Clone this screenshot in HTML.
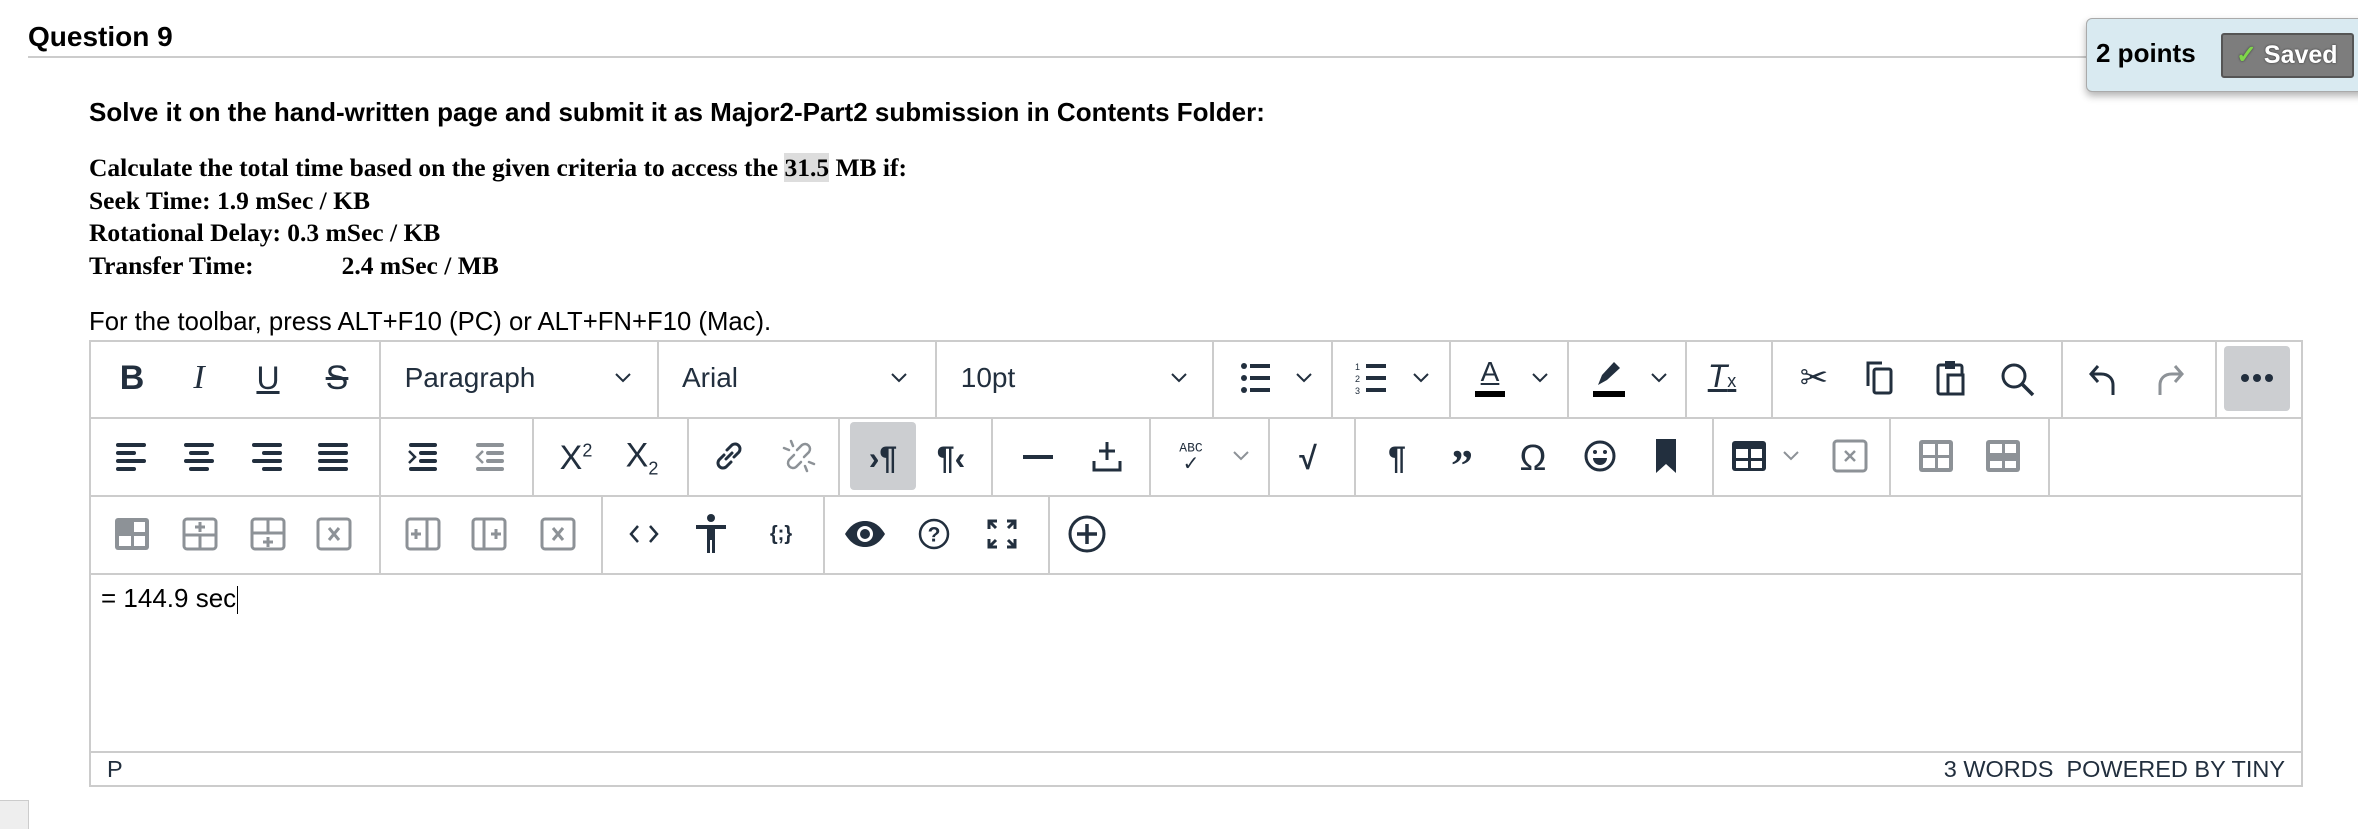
<!DOCTYPE html>
<html><head><meta charset="utf-8"><style>
body{margin:0;width:2358px;height:828px;background:#fff;position:relative;overflow:hidden;font-family:"Liberation Sans",Arial,sans-serif;color:#000}
.a{position:absolute}
.i{position:absolute;transform:translate(-50%,-50%);color:#222f3e;line-height:1;white-space:nowrap}
.g{color:#8d9297}
.v{position:absolute;width:2px;background:#ccc}
.ch{position:absolute;transform:translate(-50%,-50%)}
.serif{font-family:"Liberation Serif",serif;font-weight:bold;font-size:25.5px;position:absolute;left:89px}
</style></head><body>
<div class="a" style="left:28px;top:21px;font-size:28px;font-weight:bold">Question 9</div>
<div class="a" style="left:28px;top:56px;width:2070px;height:2px;background:#ccc"></div>
<div class="a" style="left:2086px;top:18px;width:280px;height:72px;background:#d9eaf1;border:1px solid #aaa;border-radius:6px;box-shadow:0 4px 8px rgba(0,0,0,.3)"></div>
<div class="a" style="left:2096px;top:38px;font-size:26px;font-weight:bold">2 points</div>
<div class="a" style="left:2221px;top:33px;width:133px;height:45px;background:#7d7d7d;border:2px solid #555;box-sizing:border-box;border-radius:3px"></div>
<div class="a" style="left:2236px;top:40px;font-size:25px;font-weight:bold;color:#fff;text-shadow:0 0 2px #333"><span style="color:#7fd64a">✓</span> Saved</div>

<div class="a" style="left:89px;top:97px;font-size:26px;font-weight:bold">Solve it on the hand-written page and submit it as Major2-Part2 submission in Contents Folder:</div>
<div class="serif" style="top:153px">Calculate the total time based on the given criteria to access the <span style="background:#ddd">31.5</span> MB if:</div>
<div class="serif" style="top:186px">Seek Time: 1.9 mSec / KB</div>
<div class="serif" style="top:218px">Rotational Delay: 0.3 mSec / KB</div>
<div class="serif" style="top:251px">Transfer Time:<span style="display:inline-block;width:88px"></span>2.4 mSec / MB</div>
<div class="a" style="left:89px;top:308px;font-size:25.7px">For the toolbar, press ALT+F10 (PC) or ALT+FN+F10 (Mac).</div>

<div class="a" style="left:89px;top:340px;width:2214px;height:447px;border:2px solid #ccc;box-sizing:border-box"></div>
<div class="a" style="left:89px;top:417px;width:2214px;height:2px;background:#ccc"></div>
<div class="a" style="left:89px;top:495px;width:2214px;height:2px;background:#ccc"></div>
<div class="a" style="left:89px;top:573px;width:2214px;height:2px;background:#ccc"></div>
<div class="a" style="left:89px;top:751px;width:2214px;height:2px;background:#ccc"></div>
<!-- row1 seps -->
<div class="v" style="left:379px;top:340px;height:77px"></div><div class="v" style="left:657px;top:340px;height:77px"></div><div class="v" style="left:935px;top:340px;height:77px"></div><div class="v" style="left:1212px;top:340px;height:77px"></div><div class="v" style="left:1331px;top:340px;height:77px"></div><div class="v" style="left:1449px;top:340px;height:77px"></div><div class="v" style="left:1567px;top:340px;height:77px"></div><div class="v" style="left:1685px;top:340px;height:77px"></div><div class="v" style="left:1771px;top:340px;height:77px"></div><div class="v" style="left:2061px;top:340px;height:77px"></div><div class="v" style="left:2215px;top:340px;height:77px"></div>
<!-- row2 seps -->
<div class="v" style="left:379px;top:417px;height:78px"></div><div class="v" style="left:532px;top:417px;height:78px"></div><div class="v" style="left:687px;top:417px;height:78px"></div><div class="v" style="left:838px;top:417px;height:78px"></div><div class="v" style="left:991px;top:417px;height:78px"></div><div class="v" style="left:1149px;top:417px;height:78px"></div><div class="v" style="left:1268px;top:417px;height:78px"></div><div class="v" style="left:1354px;top:417px;height:78px"></div><div class="v" style="left:1712px;top:417px;height:78px"></div><div class="v" style="left:1889px;top:417px;height:78px"></div><div class="v" style="left:2048px;top:417px;height:78px"></div>
<!-- row3 seps -->
<div class="v" style="left:379px;top:495px;height:78px"></div><div class="v" style="left:601px;top:495px;height:78px"></div><div class="v" style="left:823px;top:495px;height:78px"></div><div class="v" style="left:1048px;top:495px;height:78px"></div>

<!-- row1 -->
<div class="i" style="left:132px;top:378px;font-size:34px;font-weight:bold">B</div>
<div class="i" style="left:199px;top:378px;font-size:34px;font-style:italic;font-family:'Liberation Serif',serif">I</div>
<div class="i" style="left:268px;top:378px;font-size:32px;text-decoration:underline">U</div>
<div class="i" style="left:337px;top:378px;font-size:34px;text-decoration:line-through">S</div>
<div class="i" style="left:470px;top:378px;font-size:28px">Paragraph</div>
<div class="i" style="left:710px;top:378px;font-size:28px">Arial</div>
<div class="i" style="left:988px;top:378px;font-size:28px">10pt</div>
<svg class="ch" style="left:623px;top:378px" width="18" height="12"><path d="M2 2l7 7 7-7" fill="none" stroke="#222f3e" stroke-width="2"/></svg>
<svg class="ch" style="left:899px;top:378px" width="18" height="12"><path d="M2 2l7 7 7-7" fill="none" stroke="#222f3e" stroke-width="2"/></svg>
<svg class="ch" style="left:1179px;top:378px" width="18" height="12"><path d="M2 2l7 7 7-7" fill="none" stroke="#222f3e" stroke-width="2"/></svg>
<svg class="ch" style="left:1256px;top:378px" width="34" height="34"><g fill="#222f3e"><circle cx="5" cy="5" r="3"/><circle cx="5" cy="17" r="3"/><circle cx="5" cy="29" r="3"/><rect x="11" y="3" width="20" height="4"/><rect x="11" y="15" width="20" height="4"/><rect x="11" y="27" width="20" height="4"/></g></svg>
<svg class="ch" style="left:1304px;top:378px" width="18" height="12"><path d="M2 2l7 7 7-7" fill="none" stroke="#222f3e" stroke-width="2"/></svg>
<svg class="ch" style="left:1372px;top:378px" width="34" height="34"><g fill="#222f3e"><rect x="11" y="3" width="20" height="4"/><rect x="11" y="15" width="20" height="4"/><rect x="11" y="27" width="20" height="4"/></g><text x="0" y="9" font-size="9" fill="#222f3e">1</text><text x="0" y="21" font-size="9" fill="#222f3e">2</text><text x="0" y="33" font-size="9" fill="#222f3e">3</text></svg>
<svg class="ch" style="left:1421px;top:378px" width="18" height="12"><path d="M2 2l7 7 7-7" fill="none" stroke="#222f3e" stroke-width="2"/></svg>
<div class="i" style="left:1490px;top:372px;font-size:28px;text-decoration:underline">A</div>
<div class="a" style="left:1475px;top:391px;width:30px;height:6px;background:#000"></div>
<svg class="ch" style="left:1540px;top:378px" width="18" height="12"><path d="M2 2l7 7 7-7" fill="none" stroke="#222f3e" stroke-width="2"/></svg>
<svg class="ch" style="left:1609px;top:374px" width="34" height="30"><path d="M6 26l4-10 12-13 6 6-13 12z" fill="#222f3e"/></svg>
<div class="a" style="left:1593px;top:391px;width:32px;height:6px;background:#000"></div>
<svg class="ch" style="left:1659px;top:378px" width="18" height="12"><path d="M2 2l7 7 7-7" fill="none" stroke="#222f3e" stroke-width="2"/></svg>
<div class="i" style="left:1722px;top:376px;font-size:32px;font-style:italic;text-decoration:underline">T<span style="font-size:18px;font-style:normal;text-decoration:none">x</span></div>
<div class="i" style="left:1814px;top:378px;font-size:34px">✂</div>
<svg class="ch" style="left:1880px;top:378px" width="30" height="36"><path d="M3 26V3h14" fill="none" stroke="#222f3e" stroke-width="3"/><rect x="9" y="9" width="17" height="24" rx="2" fill="none" stroke="#222f3e" stroke-width="3"/></svg>
<svg class="ch" style="left:1951px;top:378px" width="32" height="38"><rect x="3" y="6" width="24" height="29" rx="2" fill="none" stroke="#222f3e" stroke-width="3"/><rect x="10" y="2" width="10" height="8" fill="#222f3e"/><rect x="13" y="16" width="15" height="19" fill="#fff" stroke="#222f3e" stroke-width="3"/></svg>
<svg class="ch" style="left:2018px;top:380px" width="38" height="38"><circle cx="15" cy="15" r="11" fill="none" stroke="#222f3e" stroke-width="3"/><path d="M23 23l11 11" stroke="#222f3e" stroke-width="3.5"/></svg>
<svg class="ch" style="left:2103px;top:380px" width="30" height="36"><path d="M10 4L3 12l7 8M3 12h10c8 0 12 5 12 11v10" fill="none" stroke="#222f3e" stroke-width="3"/></svg>
<svg class="ch" style="left:2170px;top:380px" width="30" height="36"><path d="M20 4l7 8-7 8M27 12H17c-8 0-12 5-12 11v10" fill="none" stroke="#8d9297" stroke-width="3"/></svg>
<div class="a" style="left:2224px;top:346px;width:66px;height:65px;background:#ccced1;border-radius:4px"></div>
<svg class="ch" style="left:2257px;top:378px" width="34" height="10"><g fill="#222f3e"><circle cx="5" cy="5" r="4"/><circle cx="17" cy="5" r="4"/><circle cx="29" cy="5" r="4"/></g></svg>

<!-- row2 -->
<svg class="ch" style="left:132px;top:456px" width="32" height="30"><g fill="#222f3e"><rect y="2" width="30" height="4" rx="2"/><rect y="10" width="20" height="4" rx="2"/><rect y="18" width="30" height="4" rx="2"/><rect y="26" width="20" height="4" rx="2"/></g></svg>
<svg class="ch" style="left:200px;top:456px" width="32" height="30"><g fill="#222f3e"><rect y="2" width="30" height="4" rx="2"/><rect x="5" y="10" width="20" height="4" rx="2"/><rect y="18" width="30" height="4" rx="2"/><rect x="5" y="26" width="20" height="4" rx="2"/></g></svg>
<svg class="ch" style="left:268px;top:456px" width="32" height="30"><g fill="#222f3e"><rect y="2" width="30" height="4" rx="2"/><rect x="10" y="10" width="20" height="4" rx="2"/><rect y="18" width="30" height="4" rx="2"/><rect x="10" y="26" width="20" height="4" rx="2"/></g></svg>
<svg class="ch" style="left:334px;top:456px" width="32" height="30"><g fill="#222f3e"><rect y="2" width="30" height="4" rx="2"/><rect y="10" width="30" height="4" rx="2"/><rect y="18" width="30" height="4" rx="2"/><rect y="26" width="30" height="4" rx="2"/></g></svg>
<svg class="ch" style="left:423px;top:456px" width="32" height="30"><g fill="#222f3e"><rect x="2" y="2" width="28" height="4" rx="2"/><rect x="12" y="10" width="18" height="4" rx="2"/><rect x="12" y="18" width="18" height="4" rx="2"/><rect x="2" y="26" width="28" height="4" rx="2"/><path d="M2 10l6 6-6 6" fill="none" stroke="#222f3e" stroke-width="2.5"/></g></svg>
<svg class="ch" style="left:490px;top:456px" width="32" height="30"><g fill="#8d9297"><rect x="2" y="2" width="28" height="4" rx="2"/><rect x="12" y="10" width="18" height="4" rx="2"/><rect x="12" y="18" width="18" height="4" rx="2"/><rect x="2" y="26" width="28" height="4" rx="2"/><path d="M9 10l-6 6 6 6" fill="none" stroke="#8d9297" stroke-width="2.5"/></g></svg>
<div class="i" style="left:576px;top:458px;font-size:34px">X<sup style="font-size:18px">2</sup></div>
<div class="i" style="left:642px;top:458px;font-size:34px">X<sub style="font-size:18px">2</sub></div>
<svg class="ch" style="left:729px;top:456px" width="36" height="36"><path d="M15 21l6-6M13 17l-5 5a5 5 0 007 7l5-5M23 19l5-5a5 5 0 00-7-7l-5 5" fill="none" stroke="#222f3e" stroke-width="3" stroke-linecap="round"/></svg>
<svg class="ch" style="left:799px;top:456px" width="36" height="36"><path d="M13 17l-5 5a5 5 0 007 7l5-5M23 19l5-5a5 5 0 00-7-7l-5 5M10 3l2 5M3 10l5 2M26 33l-2-5M33 26l-5-2" fill="none" stroke="#8d9297" stroke-width="2.5" stroke-linecap="round"/></svg>
<div class="a" style="left:850px;top:422px;width:66px;height:68px;background:#ccced1;border-radius:4px"></div>
<div class="i" style="left:883px;top:458px;font-size:32px;font-weight:bold">›¶</div>
<div class="i" style="left:951px;top:458px;font-size:32px;font-weight:bold">¶‹</div>
<div class="a" style="left:1023px;top:455px;width:30px;height:4px;background:#222f3e"></div>
<svg class="ch" style="left:1107px;top:456px" width="32" height="34"><path d="M16 3v18M8 12h16M3 22v9h26v-9" fill="none" stroke="#222f3e" stroke-width="3"/></svg>
<div class="i" style="left:1191px;top:448px;font-size:13px;font-family:'Liberation Mono',monospace">ABC</div>
<div class="i" style="left:1191px;top:464px;font-size:20px">✓</div>
<svg class="ch" style="left:1241px;top:456px" width="18" height="12"><path d="M2 2l7 7 7-7" fill="none" stroke="#8d9297" stroke-width="2"/></svg>
<div class="i" style="left:1308px;top:458px;font-size:32px;font-weight:bold">√</div>
<div class="i" style="left:1397px;top:458px;font-size:32px;font-weight:bold">¶</div>
<div class="i" style="left:1462px;top:466px;font-size:44px;font-weight:bold;font-family:'Liberation Serif',serif">”</div>
<div class="i" style="left:1533px;top:458px;font-size:36px">Ω</div>
<svg class="ch" style="left:1600px;top:456px" width="34" height="34"><circle cx="17" cy="17" r="14" fill="none" stroke="#222f3e" stroke-width="3"/><circle cx="12" cy="13" r="2" fill="#222f3e"/><circle cx="22" cy="13" r="2" fill="#222f3e"/><path d="M10 19h14a7 7 0 01-14 0z" fill="#222f3e"/></svg>
<svg class="ch" style="left:1666px;top:456px" width="24" height="36"><path d="M2 1h20v34l-10-9-10 9z" fill="#222f3e"/></svg>
<svg class="ch" style="left:1749px;top:456px" width="36" height="32"><rect x="1" y="1" width="34" height="30" rx="3" fill="#222f3e"/><g fill="#fff"><rect x="5" y="9" width="12" height="9"/><rect x="20" y="9" width="11" height="9"/><rect x="5" y="21" width="12" height="7"/><rect x="20" y="21" width="11" height="7"/></g></svg>
<svg class="ch" style="left:1791px;top:456px" width="18" height="12"><path d="M2 2l7 7 7-7" fill="none" stroke="#8d9297" stroke-width="2"/></svg>
<svg class="ch" style="left:1850px;top:456px" width="36" height="34"><rect x="2" y="2" width="32" height="30" rx="3" fill="none" stroke="#8d9297" stroke-width="3"/><path d="M13 12l10 10M23 12l-10 10" stroke="#8d9297" stroke-width="2.5"/></svg>
<svg class="ch" style="left:1936px;top:456px" width="36" height="34"><rect x="1" y="1" width="34" height="32" rx="3" fill="#8d9297"/><g fill="#fff"><rect x="5" y="5" width="12" height="11"/><rect x="20" y="5" width="11" height="11"/><rect x="5" y="19" width="12" height="10"/><rect x="20" y="19" width="11" height="10"/></g></svg>
<svg class="ch" style="left:2003px;top:456px" width="36" height="34"><rect x="1" y="1" width="34" height="32" rx="3" fill="#8d9297"/><g fill="#fff"><rect x="5" y="5" width="12" height="9"/><rect x="20" y="5" width="11" height="9"/><rect x="5" y="22" width="12" height="7"/><rect x="20" y="22" width="11" height="7"/></g></svg>

<!-- row3 -->
<svg class="ch" style="left:132px;top:534px" width="36" height="34"><rect x="1" y="1" width="34" height="32" rx="3" fill="#8d9297"/><g fill="#fff"><rect x="20" y="5" width="11" height="10"/><rect x="5" y="19" width="12" height="10"/><rect x="20" y="19" width="11" height="10"/></g></svg>
<svg class="ch" style="left:200px;top:534px" width="36" height="34"><rect x="2" y="2" width="32" height="30" rx="3" fill="none" stroke="#8d9297" stroke-width="3"/><path d="M2 18h32M18 18v14M18 5v10M13 10h10" stroke="#8d9297" stroke-width="3"/></svg>
<svg class="ch" style="left:268px;top:534px" width="36" height="34"><rect x="2" y="2" width="32" height="30" rx="3" fill="none" stroke="#8d9297" stroke-width="3"/><path d="M2 16h32M18 2v14M18 20v10M13 25h10" stroke="#8d9297" stroke-width="3"/></svg>
<svg class="ch" style="left:334px;top:534px" width="36" height="34"><rect x="2" y="2" width="32" height="30" rx="3" fill="none" stroke="#8d9297" stroke-width="3"/><path d="M13 11l10 12M23 11l-10 12" stroke="#8d9297" stroke-width="3"/></svg>
<svg class="ch" style="left:423px;top:534px" width="36" height="34"><rect x="2" y="2" width="32" height="30" rx="3" fill="none" stroke="#8d9297" stroke-width="3"/><path d="M22 2v30M6 17h10M11 12v10" stroke="#8d9297" stroke-width="3"/></svg>
<svg class="ch" style="left:489px;top:534px" width="36" height="34"><rect x="2" y="2" width="32" height="30" rx="3" fill="none" stroke="#8d9297" stroke-width="3"/><path d="M13 2v30M20 17h10M25 12v10" stroke="#8d9297" stroke-width="3"/></svg>
<svg class="ch" style="left:558px;top:534px" width="36" height="34"><rect x="2" y="2" width="32" height="30" rx="3" fill="none" stroke="#8d9297" stroke-width="3"/><path d="M13 11l10 12M23 11l-10 12" stroke="#8d9297" stroke-width="3"/></svg>
<svg class="ch" style="left:644px;top:534px" width="30" height="20"><path d="M9 2L2 10l7 8M21 2l7 8-7 8" fill="none" stroke="#222f3e" stroke-width="2.5"/></svg>
<svg class="ch" style="left:711px;top:534px" width="34" height="40"><circle cx="17" cy="4" r="4" fill="#222f3e"/><path d="M2 11h30v4H21v24h-3V26h-2v13h-3V15H2z" fill="#222f3e"/></svg>
<div class="i" style="left:781px;top:534px;font-size:20px;font-weight:bold">{;}</div>
<svg class="ch" style="left:865px;top:534px" width="44" height="30"><path d="M2 15C8 5 15 2 22 2s14 3 20 13c-6 10-13 13-20 13S8 25 2 15z" fill="#222f3e"/><circle cx="22" cy="15" r="8" fill="#fff"/><circle cx="22" cy="15" r="5" fill="#222f3e"/></svg>
<svg class="ch" style="left:934px;top:534px" width="34" height="34"><circle cx="17" cy="17" r="14" fill="none" stroke="#222f3e" stroke-width="2.5"/></svg>
<div class="i" style="left:934px;top:535px;font-size:21px;font-weight:bold">?</div>
<svg class="ch" style="left:1002px;top:534px" width="32" height="32"><path d="M3 11V3h8M3 3l7 7M29 11V3h-8M29 3l-7 7M3 21v8h8M3 29l7-7M29 21v8h-8M29 29l-7-7" fill="none" stroke="#222f3e" stroke-width="3"/></svg>
<svg class="ch" style="left:1087px;top:534px" width="40" height="40"><circle cx="20" cy="20" r="17" fill="none" stroke="#222f3e" stroke-width="3"/><path d="M20 10v20M10 20h20" stroke="#222f3e" stroke-width="3.5"/></svg>

<div class="a" style="left:101px;top:583px;font-size:26px">= 144.9 sec<span style="display:inline-block;width:1px;height:28px;background:#000;vertical-align:middle;margin-left:1px"></span></div>
<div class="a" style="left:107px;top:756px;font-size:23.5px;color:#222f3e">P</div>
<div class="a" style="right:73px;top:756px;font-size:23.5px;color:#222f3e">3 WORDS&nbsp; POWERED BY TINY</div>
<div class="a" style="left:0;top:800px;width:28px;height:28px;background:#eee;border-top:1px solid #ccc;border-right:1px solid #ccc"></div>
</body></html>
